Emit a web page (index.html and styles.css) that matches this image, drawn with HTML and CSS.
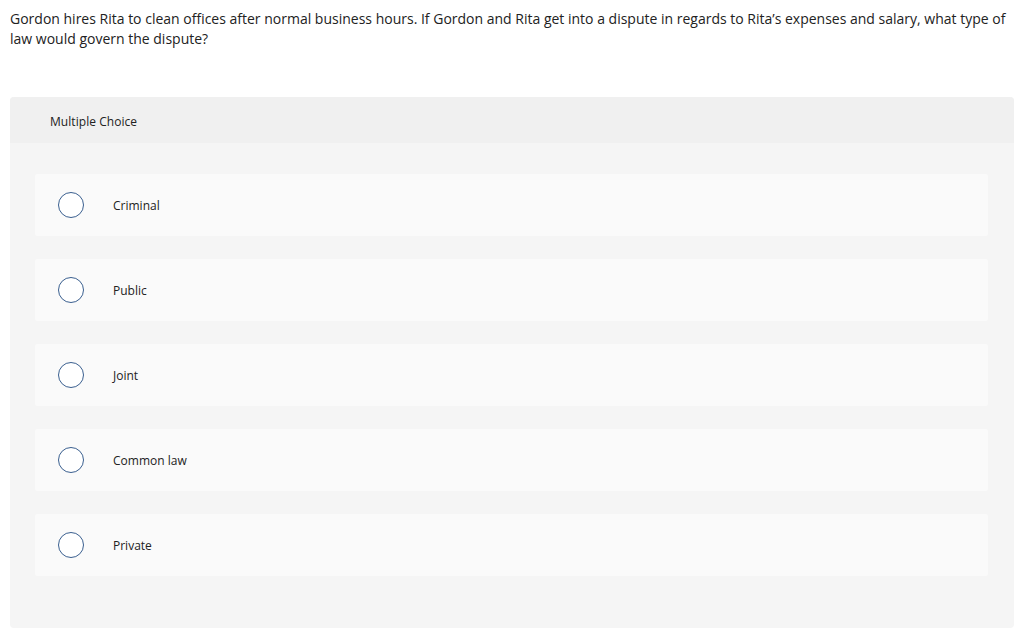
FILE: index.html
```html
<!DOCTYPE html>
<html>
<head>
<meta charset="utf-8">
<link rel="stylesheet" href="styles.css">
</head>
<body>
<p class="question">Gordon hires Rita to clean offices after normal business hours. If Gordon and Rita get into a dispute in regards to Rita’s expenses and salary, what type of law would govern the dispute?</p>
<div class="card">
  <div class="card-head">Multiple Choice</div>
  <div class="card-body">
    <div class="option"><span class="radio"></span><span class="label">Criminal</span></div>
    <div class="option"><span class="radio"></span><span class="label">Public</span></div>
    <div class="option"><span class="radio"></span><span class="label">Joint</span></div>
    <div class="option"><span class="radio"></span><span class="label">Common law</span></div>
    <div class="option"><span class="radio"></span><span class="label">Private</span></div>
  </div>
</div>
</body>
</html>
```
FILE: styles.css
```css
html, body { margin: 0; padding: 0; background: #fff; }
body {
  font-family: "Open Sans", "Liberation Sans", sans-serif;
  color: #222;
  padding: 9px 10px 0 10px;
}
.question {
  margin: 0;
  font-size: 14px;
  line-height: 20px;
}
.card {
  margin-top: 48px;
  width: 1004px;
  background: #f5f5f5;
  border-radius: 4px;
  overflow: hidden;
}
.card-head {
  height: 46px;
  background: #f0f0f0;
  box-sizing: border-box;
  padding: 17px 0 0 40px;
  font-size: 12px;
  line-height: 16px;
  letter-spacing: 0.05px;
}
.card-body {
  padding: 31px 26px 52px 25px;
  display: flex;
  flex-direction: column;
  gap: 23px;
}
.option {
  height: 62px;
  background: #fafafa;
  border-radius: 2px;
  display: flex;
  align-items: center;
  padding-left: 23px;
}
.radio {
  width: 24px;
  height: 24px;
  border: 1px solid #3a5f8f;
  border-radius: 50%;
  background: #fff;
  flex: none;
}
.label {
  margin-left: 29px;
  font-size: 12px;
}
```
